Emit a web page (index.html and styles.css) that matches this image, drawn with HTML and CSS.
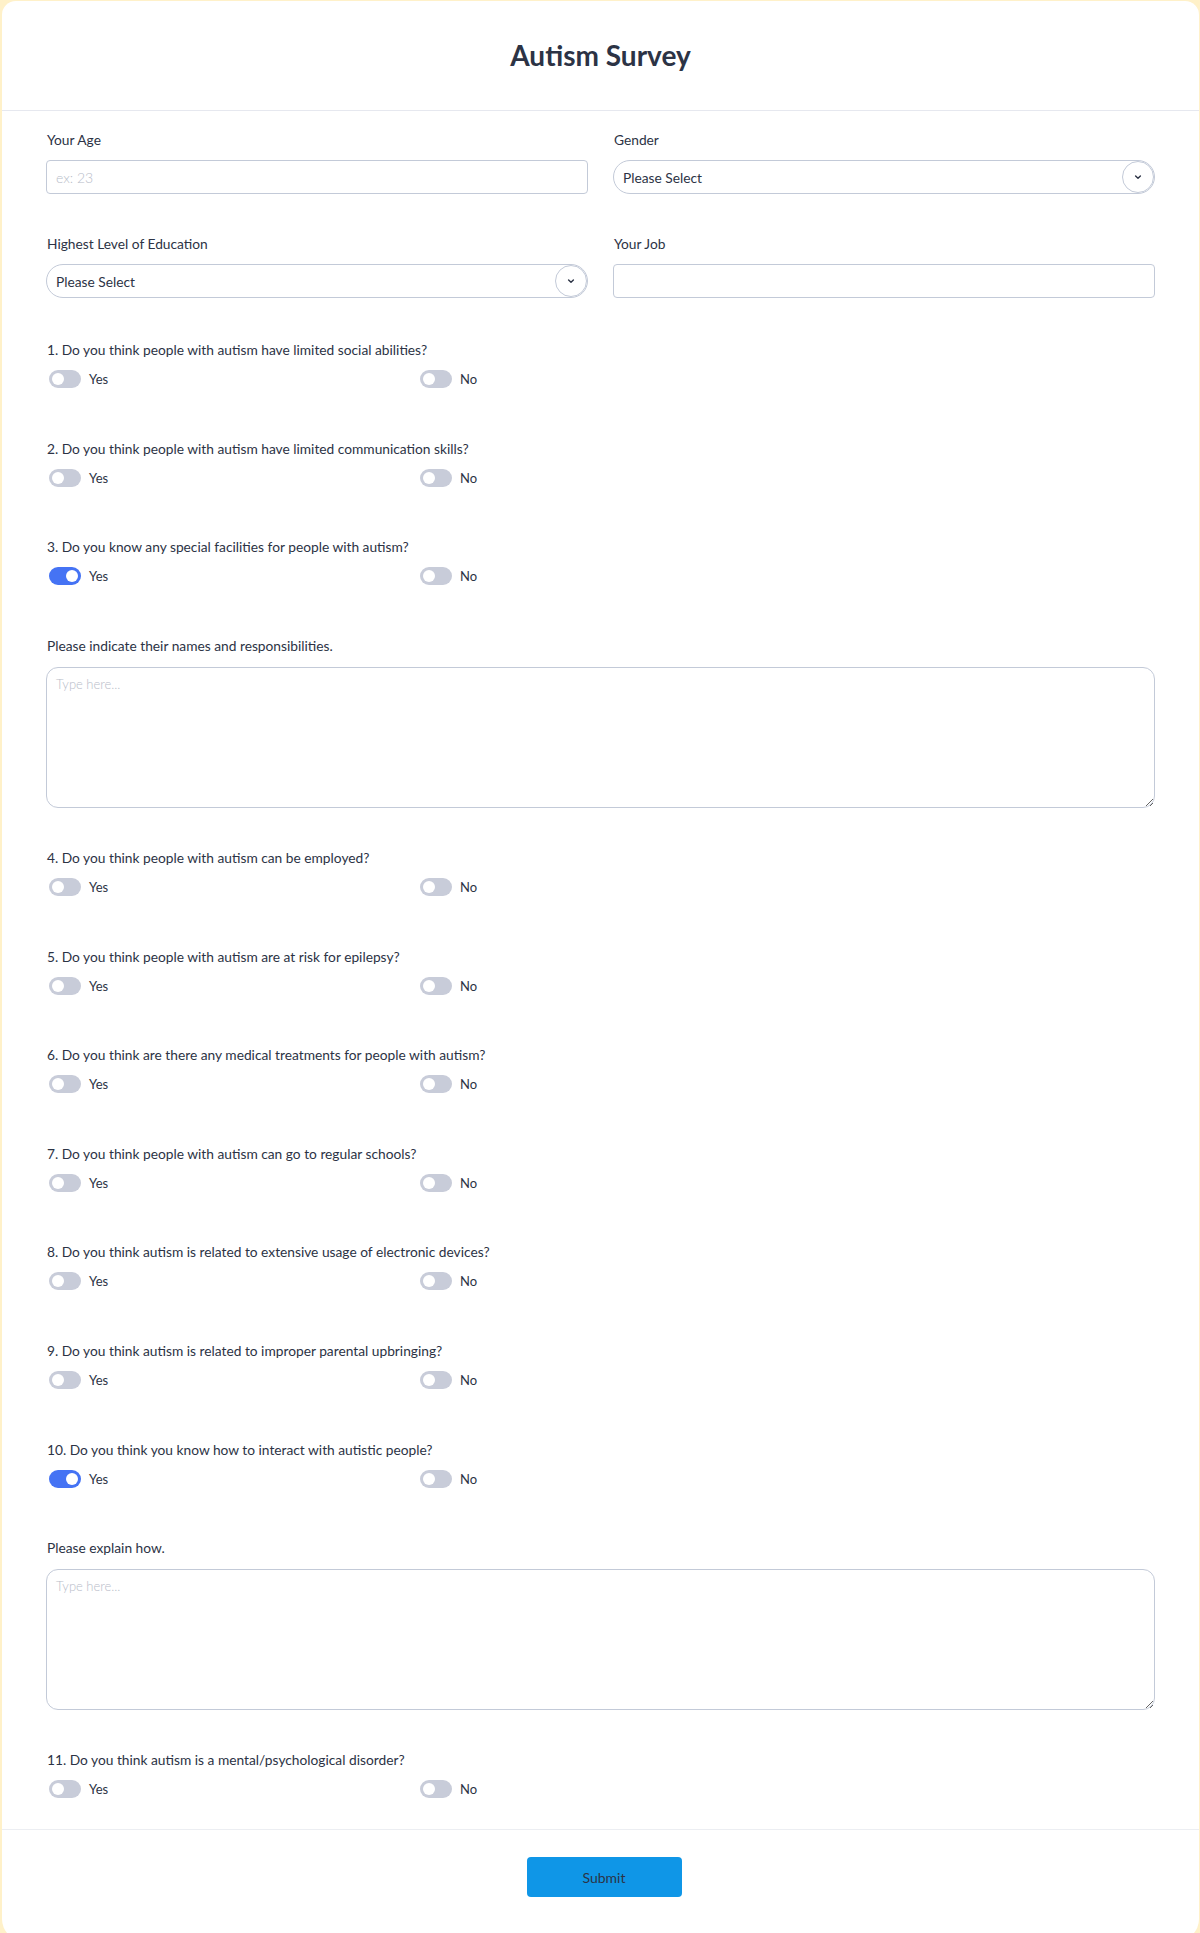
FILE: index.html
```html
<!DOCTYPE html>
<html lang="en">
<head>
<meta charset="utf-8">
<title>Autism Survey</title>
<link rel="stylesheet" href="styles.css">
</head>
<body>
<div class="card">
  <header class="card-header">
    <h1 class="title">Autism Survey</h1>
  </header>
  <form class="form-body">
    <div class="grid-2">
      <div class="field">
        <label class="label">Your Age</label>
        <input class="text-input" type="text" placeholder="ex: 23">
      </div>
      <div class="field">
        <label class="label">Gender</label>
        <div class="select-wrap">
          <select class="select"><option>Please Select</option></select>
          <span class="select-btn"><svg width="10" height="10" viewBox="0 0 10 10"><path d="M2.6 3.9 L5 6.2 L7.4 3.9" fill="none" stroke="#2c3345" stroke-width="1.4" stroke-linecap="round" stroke-linejoin="round"/></svg></span>
        </div>
      </div>
      <div class="field">
        <label class="label">Highest Level of Education</label>
        <div class="select-wrap">
          <select class="select"><option>Please Select</option></select>
          <span class="select-btn"><svg width="10" height="10" viewBox="0 0 10 10"><path d="M2.6 3.9 L5 6.2 L7.4 3.9" fill="none" stroke="#2c3345" stroke-width="1.4" stroke-linecap="round" stroke-linejoin="round"/></svg></span>
        </div>
      </div>
      <div class="field">
        <label class="label">Your Job</label>
        <input class="text-input" type="text">
      </div>
    </div>

    <div class="question">
      <div class="label">1. Do you think people with autism have limited social abilities?</div>
      <div class="options">
        <label class="option"><span class="toggle"></span>Yes</label>
        <label class="option"><span class="toggle"></span>No</label>
      </div>
    </div>
    <div class="question">
      <div class="label">2. Do you think people with autism have limited communication skills?</div>
      <div class="options">
        <label class="option"><span class="toggle"></span>Yes</label>
        <label class="option"><span class="toggle"></span>No</label>
      </div>
    </div>
    <div class="question">
      <div class="label">3. Do you know any special facilities for people with autism?</div>
      <div class="options">
        <label class="option"><span class="toggle on"></span>Yes</label>
        <label class="option"><span class="toggle"></span>No</label>
      </div>
    </div>
    <div class="text-field">
      <div class="label">Please indicate their names and responsibilities.</div>
      <textarea class="textarea" placeholder="Type here..."></textarea>
    </div>
    <div class="question">
      <div class="label">4. Do you think people with autism can be employed?</div>
      <div class="options">
        <label class="option"><span class="toggle"></span>Yes</label>
        <label class="option"><span class="toggle"></span>No</label>
      </div>
    </div>
    <div class="question">
      <div class="label">5. Do you think people with autism are at risk for epilepsy?</div>
      <div class="options">
        <label class="option"><span class="toggle"></span>Yes</label>
        <label class="option"><span class="toggle"></span>No</label>
      </div>
    </div>
    <div class="question">
      <div class="label">6. Do you think are there any medical treatments for people with autism?</div>
      <div class="options">
        <label class="option"><span class="toggle"></span>Yes</label>
        <label class="option"><span class="toggle"></span>No</label>
      </div>
    </div>
    <div class="question">
      <div class="label">7. Do you think people with autism can go to regular schools?</div>
      <div class="options">
        <label class="option"><span class="toggle"></span>Yes</label>
        <label class="option"><span class="toggle"></span>No</label>
      </div>
    </div>
    <div class="question">
      <div class="label">8. Do you think autism is related to extensive usage of electronic devices?</div>
      <div class="options">
        <label class="option"><span class="toggle"></span>Yes</label>
        <label class="option"><span class="toggle"></span>No</label>
      </div>
    </div>
    <div class="question">
      <div class="label">9. Do you think autism is related to improper parental upbringing?</div>
      <div class="options">
        <label class="option"><span class="toggle"></span>Yes</label>
        <label class="option"><span class="toggle"></span>No</label>
      </div>
    </div>
    <div class="question">
      <div class="label">10. Do you think you know how to interact with autistic people?</div>
      <div class="options">
        <label class="option"><span class="toggle on"></span>Yes</label>
        <label class="option"><span class="toggle"></span>No</label>
      </div>
    </div>
    <div class="text-field">
      <div class="label">Please explain how.</div>
      <textarea class="textarea" placeholder="Type here..."></textarea>
    </div>
    <div class="question last">
      <div class="label">11. Do you think autism is a mental/psychological disorder?</div>
      <div class="options">
        <label class="option"><span class="toggle"></span>Yes</label>
        <label class="option"><span class="toggle"></span>No</label>
      </div>
    </div>
  </form>
  <footer class="card-footer">
    <button class="submit" type="button">Submit</button>
  </footer>
</div>
</body>
</html>
```

FILE: styles.css
```css
* { box-sizing: border-box; }
html, body {
  margin: 0;
  padding: 0;
}
body {
  background: #fff1c9;
  font-family: Lato, "Noto Sans", Arial, sans-serif;
  color: #2c3345;
  height: 1933px;
  overflow: hidden;
}
.card {
  margin: 1px 1px 0 2px;
  background: #ffffff;
  border-radius: 14px 14px 22px 22px;
  min-height: 1940px;
}
.card-header {
  height: 110px;
  display: flex;
  align-items: center;
  justify-content: center;
  border-bottom: 1px solid #e6e8ef;
}
.title {
  margin: 0;
  font-size: 28px;
  font-weight: 700;
  color: #2c3345;
  padding-bottom: 1px;
}
.form-body {
  padding: 19px 44px 0 44px;
}
.grid-2 {
  display: grid;
  grid-template-columns: 1fr 1fr;
  column-gap: 25px;
  row-gap: 40px;
}
.field {
  display: flex;
  flex-direction: column;
}
.label {
  font-size: 13.75px;
  line-height: 20px;
  height: 20px;
  color: #2c3345;
  padding-left: 1px;
}
.field .label {
  margin-bottom: 10px;
}
.text-input {
  height: 34px;
  border: 1px solid #c3cad8;
  border-radius: 4px;
  padding: 0 9px;
  font-family: Lato, "Noto Sans", Arial, sans-serif;
  font-size: 14px;
  color: #2c3345;
  background: #fff;
  outline: none;
}
.text-input::placeholder,
.textarea::placeholder {
  color: #b8bdc9;
  font-weight: 300;
}
.select-wrap {
  position: relative;
  height: 34px;
}
.select {
  appearance: none;
  -webkit-appearance: none;
  width: 100%;
  height: 34px;
  border: 1px solid #c3cad8;
  border-radius: 17px;
  background: #fff;
  padding: 0 40px 0 9px;
  font-family: Lato, "Noto Sans", Arial, sans-serif;
  font-size: 13.75px;
  color: #2c3345;
  outline: none;
}
.select-btn {
  position: absolute;
  right: 1px;
  top: 1px;
  width: 32px;
  height: 32px;
  border: 1px solid #c3cad8;
  border-radius: 50%;
  background: #fff;
  display: flex;
  align-items: center;
  justify-content: center;
  pointer-events: none;
}
.question {
  margin-top: 42px;
}
.question + .question {
  margin-top: 49.65px;
}
.options {
  display: grid;
  grid-template-columns: 371px 371px 1fr;
  margin-top: 9px;
  height: 20px;
}
.option {
  display: flex;
  align-items: center;
  gap: 8px;
  font-size: 13px;
  line-height: 20px;
  color: #2c3345;
  padding-left: 3px;
}
.toggle {
  position: relative;
  width: 32px;
  height: 18px;
  border-radius: 9px;
  background: #c8ccd9;
  flex: none;
}
.toggle::after {
  content: "";
  position: absolute;
  left: 3px;
  top: 3px;
  width: 12px;
  height: 12px;
  border-radius: 50%;
  background: #ffffff;
}
.toggle.on {
  background: #4573f4;
}
.toggle.on::after {
  left: 17px;
}
.text-field {
  margin-top: 49.65px;
}
.text-field .label {
  margin-bottom: 11px;
}
.textarea {
  display: block;
  width: 100%;
  height: 141px;
  border: 1px solid #c3cad8;
  border-radius: 12px;
  padding: 8px 9px;
  font-family: Lato, "Noto Sans", Arial, sans-serif;
  font-size: 13px;
  color: #2c3345;
  resize: vertical;
  outline: none;
}
.text-field + .question {
  margin-top: 40px;
}
.card-footer {
  margin-top: 30px;
  border-top: 1px solid #eceef2;
  display: flex;
  justify-content: center;
  padding-top: 27px;
  padding-left: 7px;
}
.submit {
  width: 155px;
  height: 40px;
  background: #0f96e7;
  border: none;
  border-radius: 4px;
  font-family: Lato, "Noto Sans", Arial, sans-serif;
  font-size: 14px;
  color: #2c3345;
}
```
